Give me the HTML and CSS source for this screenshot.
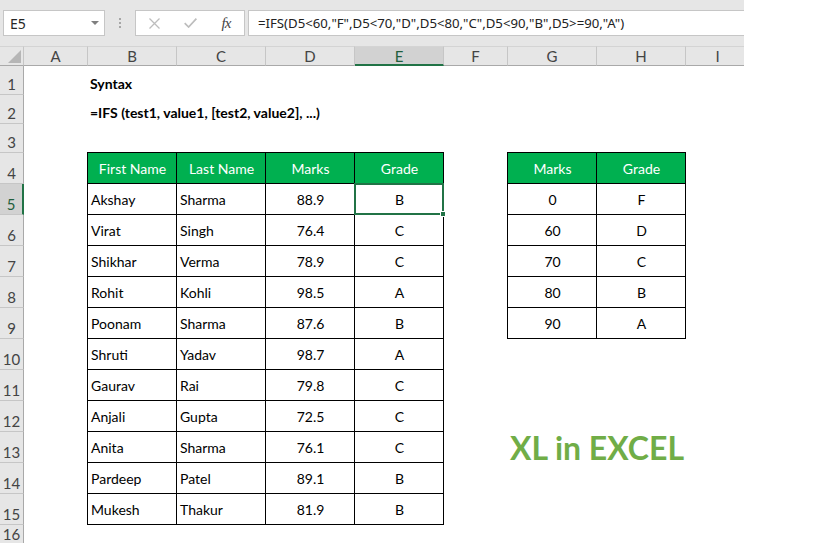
FILE: index.html
```html
<!DOCTYPE html>
<html>
  <head>
    <meta charset="utf-8" />
    <title>IFS function</title>
    <link rel="stylesheet" href="styles.css">
  </head>
  <body>
    <div class="app">
      <div class="formula-bar">
        <div class="name-box">
          <span>E5</span>
          <svg width="8" height="4"><path d="M0 0h8L4 4z" fill="#7f7f7f" /></svg>
        </div>
        <div class="grip">
          <svg width="2" height="10"><rect y="0" width="2" height="2" fill="#a6a6a6" /><rect y="4" width="2" height="2" fill="#a6a6a6" /><rect y="8" width="2" height="2" fill="#a6a6a6" /></svg>
        </div>
        <div class="fx-buttons">
          <span><svg width="11" height="11"><path d="M0.5 0.5L10.5 10.5M10.5 0.5L0.5 10.5" stroke="#bdbdbd" stroke-width="1.3" /></svg></span>
          <span><svg width="13" height="10"><path d="M0.7 5.2L4.6 9L12.4 0.6" stroke="#bdbdbd" stroke-width="1.7" fill="none" /></svg></span>
          <span class="fx">fx</span>
        </div>
        <div class="formula-input">=IFS(D5&lt;60,"F",D5&lt;70,"D",D5&lt;80,"C",D5&lt;90,"B",D5&gt;=90,"A")</div>
      </div>

      <div class="sheet">
        <div class="corner"><svg width="13" height="13"><path d="M13 0V13H0z" fill="#b6b6b6" /></svg></div>
        <div class="col-head">A</div>
        <div class="col-head">B</div>
        <div class="col-head">C</div>
        <div class="col-head">D</div>
        <div class="col-head active">E</div>
        <div class="col-head">F</div>
        <div class="col-head">G</div>
        <div class="col-head">H</div>
        <div class="col-head">I</div>

        <div class="row-head">1</div>
        <div class="row-head">2</div>
        <div class="row-head">3</div>
        <div class="row-head">4</div>
        <div class="row-head active">5</div>
        <div class="row-head">6</div>
        <div class="row-head">7</div>
        <div class="row-head">8</div>
        <div class="row-head">9</div>
        <div class="row-head">10</div>
        <div class="row-head">11</div>
        <div class="row-head">12</div>
        <div class="row-head">13</div>
        <div class="row-head">14</div>
        <div class="row-head">15</div>
        <div class="row-head">16</div>

        <div class="note title">Syntax</div>
        <div class="note syntax">=IFS (test1, value1, [test2, value2], ...)</div>

        <div class="tbl marks-table">
          <div class="hd">First Name</div><div class="hd">Last Name</div><div class="hd">Marks</div><div class="hd">Grade</div>
          <div>Akshay</div><div>Sharma</div><div class="c">88.9</div><div class="c selected">B<span class="sel"></span></div>
          <div>Virat</div><div>Singh</div><div class="c">76.4</div><div class="c">C</div>
          <div>Shikhar</div><div>Verma</div><div class="c">78.9</div><div class="c">C</div>
          <div>Rohit</div><div>Kohli</div><div class="c">98.5</div><div class="c">A</div>
          <div>Poonam</div><div>Sharma</div><div class="c">87.6</div><div class="c">B</div>
          <div>Shruti</div><div>Yadav</div><div class="c">98.7</div><div class="c">A</div>
          <div>Gaurav</div><div>Rai</div><div class="c">79.8</div><div class="c">C</div>
          <div>Anjali</div><div>Gupta</div><div class="c">72.5</div><div class="c">C</div>
          <div>Anita</div><div>Sharma</div><div class="c">76.1</div><div class="c">C</div>
          <div>Pardeep</div><div>Patel</div><div class="c">89.1</div><div class="c">B</div>
          <div>Mukesh</div><div>Thakur</div><div class="c">81.9</div><div class="c">B</div>
        </div>

        <div class="tbl grade-table">
          <div class="hd">Marks</div><div class="hd">Grade</div>
          <div class="c">0</div><div class="c">F</div>
          <div class="c">60</div><div class="c">D</div>
          <div class="c">70</div><div class="c">C</div>
          <div class="c">80</div><div class="c">B</div>
          <div class="c">90</div><div class="c">A</div>
        </div>

        <div class="brand">XL in EXCEL</div>
      </div>
    </div>
  </body>
</html>
```

FILE: styles.css
```css
html {
  box-sizing: border-box;
}
*,
*:before,
*:after {
  box-sizing: inherit;
}
body {
  margin: 0;
  background: #fff;
  font-family: Lato, "Liberation Sans", sans-serif;
  color: #000;
}
.app {
  width: 744px;
  height: 543px;
  overflow: hidden;
}

/* formula bar */
.formula-bar {
  height: 46px;
  background: #e6e6e6;
  display: flex;
  align-items: flex-start;
  padding: 10px 0 0 3px;
}
.name-box {
  width: 102px;
  height: 26px;
  background: #fff;
  border: 1px solid #c6c6c6;
  display: flex;
  align-items: center;
  justify-content: space-between;
  padding: 0 5px 0 6px;
  font: 14px "Noto Sans", sans-serif;
  color: #262626;
}
.grip {
  width: 30px;
  height: 26px;
  display: flex;
  align-items: center;
  justify-content: center;
}
.fx-buttons {
  width: 110px;
  height: 26px;
  background: #fff;
  border: 1px solid #c6c6c6;
  display: flex;
  align-items: center;
}
.fx-buttons span {
  flex: 1;
  display: flex;
  justify-content: center;
  align-items: center;
}
.fx {
  font: italic 15px "Liberation Serif", serif;
  color: #444;
  letter-spacing: -1px;
}
.formula-input {
  flex: 1;
  height: 26px;
  margin: 0 -6px 0 3px;
  background: #fff;
  border: 1px solid #c6c6c6;
  padding: 0 0 0 9px;
  font: 13.2px/24px "Noto Sans", sans-serif;
  color: #222;
  white-space: nowrap;
}

/* sheet grid */
.sheet {
  display: grid;
  grid-template-columns: 24px 64px 89px 89px 89px 89px 64px 89px 89px 64px;
  grid-template-rows: 20px repeat(3, 29px) repeat(12, 31px) 20px;
  font-size: 14px;
}
.corner,
.col-head {
  grid-row: 1;
  background: #e6e6e6;
  border-top: 1px solid #d4d4d4;
  border-bottom: 1px solid #a9a9a9;
  border-right: 1px solid #c6c6c6;
}
.corner {
  grid-column: 1;
  display: flex;
  align-items: flex-end;
  justify-content: flex-end;
  padding: 0 2px 2px 0;
}
.col-head {
  display: flex;
  align-items: center;
  justify-content: center;
  color: #444;
  font-size: 15px;
}
.col-head.active {
  background: #d2d2d2;
  border-bottom: 2px solid #217346;
  color: #1f5e3c;
}
.row-head {
  grid-column: 1;
  background: #e6e6e6;
  border-right: 1px solid #a9a9a9;
  border-bottom: 1px solid #c6c6c6;
  display: flex;
  align-items: flex-end;
  justify-content: center;
  line-height: 18px;
  padding-bottom: 1px;
  color: #444;
  font-size: 15px;
}
.row-head.active {
  background: #d2d2d2;
  border-right: 2px solid #217346;
  color: #1f5e3c;
}

.note {
  grid-column: 3;
  align-self: end;
  white-space: nowrap;
  font-weight: bold;
  line-height: 18px;
  padding: 0 0 2px 2px;
}
.title {
  grid-row: 2;
}
.syntax {
  grid-row: 3;
}

/* data tables */
.tbl {
  display: grid;
  gap: 1px;
  background: #000;
  border: 1px solid #000;
  margin: -1px 0 0 -1px;
  align-self: start;
  justify-self: start;
  grid-auto-rows: 30px;
}
.tbl > div {
  background: #fff;
  display: flex;
  align-items: center;
  padding: 0 2px 0 3px;
  white-space: nowrap;
}
.tbl > .hd {
  background: #00b050;
  color: #fff;
  justify-content: center;
}
.tbl > .c {
  justify-content: center;
}
.marks-table {
  grid-column: 3 / 7;
  grid-row: 5 / 17;
  grid-template-columns: repeat(4, 88px);
}
.grade-table {
  grid-column: 8 / 10;
  grid-row: 5 / 11;
  grid-template-columns: repeat(2, 88px);
}
.selected {
  position: relative;
}
.sel {
  position: absolute;
  top: -1px;
  left: -1px;
  right: -1px;
  bottom: -1px;
  border: 2px solid #217346;
}
.sel:after {
  content: "";
  position: absolute;
  right: -4px;
  bottom: -4px;
  width: 6px;
  height: 6px;
  background: #217346;
  border: 1px solid #fff;
}

.brand {
  grid-column: 8 / 10;
  grid-row: 14;
  align-self: center;
  text-align: center;
  font-weight: bold;
  font-size: 32px;
  line-height: 1;
  color: #70ad47;
  white-space: nowrap;
}
```
